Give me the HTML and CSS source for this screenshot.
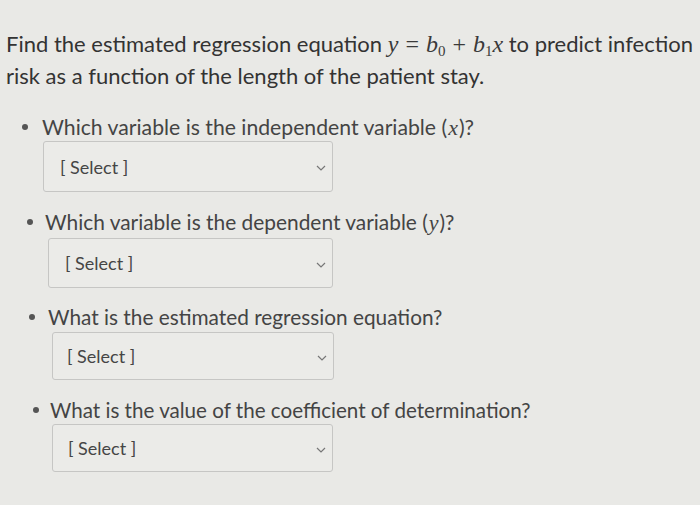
FILE: index.html
```html
<!DOCTYPE html>
<html>
<head>
<meta charset="utf-8">
<link rel="stylesheet" href="styles.css">
</head>
<body>
<div class="page">
  <p class="question">Find the estimated regression equation <span class="math"><i>y</i><span class="op">=</span><i>b</i><sub>0</sub><span class="op">+</span><i>b</i><sub>1</sub><i>x</i></span> to predict infection risk as a function of the length of the patient stay.</p>
  <ul class="items">
    <li class="item item-1">
      <div class="label">Which variable is the independent variable (<i class="mv">x</i>)?</div>
      <div class="select"><span>[ Select ]</span><svg class="chev" viewBox="0 0 10 6" width="10" height="6"><path d="M1 1 L5 5 L9 1" fill="none" stroke="#777" stroke-width="1.2"/></svg></div>
    </li>
    <li class="item item-2">
      <div class="label">Which variable is the dependent variable (<i class="mv">y</i>)?</div>
      <div class="select"><span>[ Select ]</span><svg class="chev" viewBox="0 0 10 6" width="10" height="6"><path d="M1 1 L5 5 L9 1" fill="none" stroke="#777" stroke-width="1.2"/></svg></div>
    </li>
    <li class="item item-3">
      <div class="label">What is the estimated regression equation?</div>
      <div class="select"><span>[ Select ]</span><svg class="chev" viewBox="0 0 10 6" width="10" height="6"><path d="M1 1 L5 5 L9 1" fill="none" stroke="#777" stroke-width="1.2"/></svg></div>
    </li>
    <li class="item item-4">
      <div class="label">What is the value of the coefficient of determination?</div>
      <div class="select"><span>[ Select ]</span><svg class="chev" viewBox="0 0 10 6" width="10" height="6"><path d="M1 1 L5 5 L9 1" fill="none" stroke="#777" stroke-width="1.2"/></svg></div>
    </li>
  </ul>
</div>
</body>
</html>
```
FILE: styles.css
```css
html, body {
  margin: 0;
  padding: 0;
  background: #e9e9e6;
}
.page {
  width: 700px;
  height: 505px;
  padding: 28px 0 0 6px;
  box-sizing: border-box;
  font-family: Lato, "Open Sans", sans-serif;
  color: #3b3b3b;
  overflow: hidden;
}
.question {
  margin: 0 -8px 0 0;
  font-size: 22px;
  line-height: 32px;
  color: #333333;
}
.math {
  font-family: "Liberation Serif", "DejaVu Serif", serif;
  font-size: 24px;
  line-height: 20px;
  color: #3a3a3a;
}
.math i {
  font-style: italic;
}
.math sub {
  font-size: 15px;
  font-style: normal;
  vertical-align: -4px;
  line-height: 0;
}
.op {
  font-style: normal;
  margin: 0 7px;
}
.mv {
  font-family: "Liberation Serif", "DejaVu Serif", serif;
  font-size: 22px;
  line-height: 20px;
  margin: 0 1px;
}
.items {
  list-style: none;
  margin: 20px 0 0 0;
  padding: 0;
}
.item {
  display: flex;
  flex-direction: column;
  margin-bottom: 15px;
}
.label {
  position: relative;
  font-size: 21.2px;
  line-height: 30px;
  color: #444444;
  padding-left: 36px;
}
.label::before {
  content: "";
  position: absolute;
  left: 16px;
  top: 12px;
  width: 6px;
  height: 6px;
  border-radius: 50%;
  background: #555555;
}
.select {
  display: flex;
  align-items: center;
  justify-content: space-between;
  box-sizing: border-box;
  height: 51px;
  margin-top: -1px;
  margin-left: 37px;
  width: 290px;
  padding: 0 6px 0 16px;
  border: 1px solid #c6c6c4;
  border-radius: 3px;
  background: #ebebe8;
  font-size: 18px;
  color: #454545;
}
.chev {
  margin-top: 3px;
}
.item-2 { margin-bottom: 14px; }
.item-2 .label { padding-left: 39px; font-size: 20.9px; }
.item-2 .label::before { left: 21px; }
.item-2 .select { margin-left: 42px; width: 285px; margin-top: 1px; height: 50px; }
.item-3 { margin-bottom: 15px; }
.item-3 .label { padding-left: 42px; font-size: 20.8px; }
.item-3 .label::before { left: 23px; }
.item-3 .select { margin-left: 46px; width: 282px; margin-top: 0; height: 48px; padding-left: 14px; }
.item-4 .label { padding-left: 44px; font-size: 20.6px; }
.item-4 .label::before { left: 27px; }
.item-4 .select { margin-left: 46px; width: 281px; margin-top: -1px; height: 48px; padding-left: 15px; }
```
